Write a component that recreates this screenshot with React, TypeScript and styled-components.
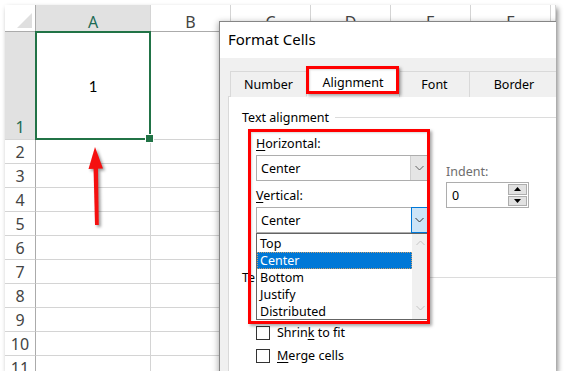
import React from "react"
import styled, { createGlobalStyle } from "styled-components"

const GlobalStyle = createGlobalStyle`
  html, body {
    margin: 0;
    padding: 0;
    background: #fff;
  }
  body {
    font-family: "Noto Sans", "Open Sans", sans-serif;
  }
  * {
    box-sizing: border-box;
  }
`

const UI_FONT = `"Noto Sans", "Open Sans", sans-serif`

const Frame = styled.div`
  position: relative;
  margin: 5px 0 0 5px;
  width: 551px;
  height: 366px;
  overflow: hidden;
  background: #fff;
  box-shadow: 2px 3px 5px rgba(0, 0, 0, 0.45);
`

/* ---------- spreadsheet ---------- */

const Sheet = styled.div`
  display: grid;
  grid-template-columns: 31px 115px repeat(5, 80px) 1fr;
  grid-template-rows: 27px 108px repeat(10, 24px);
`

const Corner = styled.div`
  position: relative;
  border-right: 1px solid #ababab;
  border-bottom: 1px solid #ababab;
  background: #fff;
  &::after {
    content: "";
    position: absolute;
    right: 3px;
    bottom: 3px;
    border-style: solid;
    border-width: 0 0 15px 15px;
    border-color: transparent transparent #dfdfdf transparent;
  }
`

const ColHeader = styled.div<{ $active?: boolean }>`
  display: flex;
  align-items: center;
  justify-content: center;
  border-right: 1px solid #d4d4d4;
  border-bottom: 1px solid ${(p) => (p.$active ? "#217346" : "#ababab")};
  background: ${(p) => (p.$active ? "#e1e1e1" : "#fff")};
  color: ${(p) => (p.$active ? "#1d6b55" : "#444")};
  font-family: ${UI_FONT};
  font-size: 16px;
  padding-top: 7px;
`

const RowHeader = styled.div<{ $active?: boolean }>`
  display: flex;
  align-items: ${(p) => (p.$active ? "flex-end" : "center")};
  justify-content: center;
  padding-bottom: ${(p) => (p.$active ? "2px" : "0")};
  border-right: 1px solid ${(p) => (p.$active ? "#217346" : "#ababab")};
  border-bottom: 1px solid #d4d4d4;
  background: ${(p) => (p.$active ? "#e1e1e1" : "#fff")};
  color: ${(p) => (p.$active ? "#1d6b55" : "#444")};
  font-family: ${UI_FONT};
  font-size: 16px;
  line-height: 20px;
`

const Cell = styled.div<{ $selected?: boolean }>`
  position: relative;
  display: flex;
  align-items: center;
  justify-content: center;
  border-right: 1px solid #d4d4d4;
  border-bottom: 1px solid #d4d4d4;
  font-family: Lato, "Liberation Sans", sans-serif;
  font-size: 15px;
  color: #000;
  ${(p) =>
    p.$selected &&
    `
    &::after {
      content: "";
      position: absolute;
      inset: -1px;
      border: 2px solid #217346;
    }
    &::before {
      content: "";
      position: absolute;
      right: -4px;
      bottom: -4px;
      width: 7px;
      height: 7px;
      background: #217346;
      border: 1px solid #fff;
      z-index: 1;
    }
  `}
`

/* ---------- dialog ---------- */

const Dialog = styled.div`
  position: absolute;
  left: 214px;
  top: 16px;
  width: 360px;
  height: 380px;
  display: flex;
  flex-direction: column;
  background: #f0f0f0;
  border: 1px solid #858585;
  box-shadow: -1px 1px 6px rgba(0, 0, 0, 0.3);
  font-family: ${UI_FONT};
  font-size: 12.5px;
  color: #000;
`

const TitleBar = styled.div`
  height: 36px;
  flex: none;
  display: flex;
  align-items: center;
  padding: 0 0 2px 8px;
  background: #fff;
  font-size: 15px;
`

const Body = styled.div`
  flex: 1;
  padding: 10px 0 0 8px;
  display: flex;
  flex-direction: column;
`

const TabStrip = styled.div`
  display: flex;
  align-items: flex-end;
  height: 29px;
  padding-left: 2px;
  position: relative;
  z-index: 1;
`

const Tab = styled.div<{ $active?: boolean; $w: number }>`
  width: ${(p) => p.$w}px;
  height: ${(p) => (p.$active ? 29 : 26)}px;
  display: flex;
  align-items: center;
  justify-content: center;
  padding-bottom: 1px;
  background: ${(p) => (p.$active ? "#fff" : "#f0f0f0")};
  border: 1px solid #d9d9d9;
  border-bottom: ${(p) => (p.$active ? "1px solid #fff" : "none")};
  margin-right: -1px;
`

const Panel = styled.div`
  flex: 1;
  margin-top: -1px;
  background: #fff;
  border: 1px solid #d9d9d9;
  padding: 12px 0 0 13px;
`

const GroupHead = styled.div`
  display: flex;
  align-items: center;
  gap: 6px;
  height: 16px;
  &::after {
    content: "";
    flex: 1;
    height: 1px;
    background: #dcdcdc;
  }
`

const GroupBody = styled.div`
  display: flex;
  padding-left: 14px;
`

const LeftCol = styled.div`
  width: 172px;
  display: flex;
  flex-direction: column;
  padding-top: 11px;
`

const RightCol = styled.div`
  display: flex;
  flex-direction: column;
  margin-left: 18px;
  padding-top: 39px;
`

const Label = styled.div<{ $muted?: boolean }>`
  height: 16px;
  line-height: 16px;
  color: ${(p) => (p.$muted ? "#6d6d6d" : "#000")};
  u {
    text-decoration: underline;
    text-underline-offset: 2px;
  }
`

const ComboWrap = styled.div`
  position: relative;
  margin-top: 3px;
  margin-bottom: 7px;
`

const Combo = styled.div`
  display: flex;
  height: 26px;
  border: 1px solid #adadad;
  background: #fff;
`

const ComboText = styled.div`
  flex: 1;
  display: flex;
  align-items: center;
  padding-left: 4px;
`

const ComboButton = styled.div<{ $open?: boolean }>`
  width: 17px;
  display: flex;
  align-items: center;
  justify-content: center;
  background: ${(p) => (p.$open ? "#cce4f7" : "#e5e5e5")};
  border: ${(p) => (p.$open ? "1px solid #0078d7" : "none")};
  border-left: 1px solid ${(p) => (p.$open ? "#0078d7" : "#cfcfcf")};
  margin: ${(p) => (p.$open ? "-1px -1px -1px 0" : "0")};
`

const List = styled.div`
  position: absolute;
  top: 26px;
  left: 0;
  right: -2px;
  height: 87px;
  display: flex;
  background: #fff;
  border: 1px solid #646464;
  z-index: 2;
`

const ListItems = styled.div`
  flex: 1;
  padding-top: 1px;
`

const ListItem = styled.div<{ $active?: boolean }>`
  height: 17px;
  line-height: 17px;
  padding-left: 3px;
  background: ${(p) => (p.$active ? "#0078d7" : "transparent")};
  color: ${(p) => (p.$active ? "#fff" : "#000")};
  outline: ${(p) => (p.$active ? "1px dotted #c8a070" : "none")};
  outline-offset: -1px;
`

const ScrollBar = styled.div`
  width: 17px;
  display: flex;
  flex-direction: column;
  justify-content: space-between;
  align-items: center;
  padding: 6px 0 8px;
  background: #f0f0f0;
`

const SpinBox = styled.div`
  margin-top: 2px;
  width: 83px;
  height: 26px;
  display: flex;
  border: 1px solid #adadad;
  background: #fff;
`

const SpinText = styled.div`
  flex: 1;
  display: flex;
  align-items: center;
  padding-left: 5px;
`

const SpinButtons = styled.div`
  width: 19px;
  margin: 1px 1px 1px 0;
  display: flex;
  flex-direction: column;
  gap: 1px;
`

const SpinButton = styled.div`
  flex: 1;
  display: flex;
  align-items: center;
  justify-content: center;
  background: #e1e1e1;
  border: 1px solid #adadad;
`

const ControlGroup = styled.div`
  margin-top: 29px;
`

const CheckList = styled.div`
  display: flex;
  flex-direction: column;
  padding: 13px 0 0 14px;
`

const CheckRow = styled.div`
  height: 23px;
  display: flex;
  align-items: center;
  gap: 7px;
  u {
    text-decoration: underline;
    text-underline-offset: 2px;
  }
`

const Box = styled.span`
  width: 14px;
  height: 14px;
  border: 1px solid #333;
  background: #fff;
`

/* ---------- annotations ---------- */

const RedBox = styled.div<{ $x: number; $y: number; $w: number; $h: number }>`
  position: absolute;
  left: ${(p) => p.$x}px;
  top: ${(p) => p.$y}px;
  width: ${(p) => p.$w}px;
  height: ${(p) => p.$h}px;
  border: 3px solid #ff0000;
  box-shadow: 2px 2px 3px rgba(0, 0, 0, 0.35), inset 1px 1px 2px rgba(0, 0, 0, 0.15);
  z-index: 5;
  pointer-events: none;
`

const Arrow = styled.svg`
  position: absolute;
  left: 80px;
  top: 138px;
  overflow: visible;
  filter: drop-shadow(2px 2px 1.5px rgba(0, 0, 0, 0.4));
  z-index: 4;
`

const Chevron = ({ up, color = "#606060" }: { up?: boolean; color?: string }) => (
  <svg width="9" height="6" viewBox="0 0 9 6">
    <polyline
      points={up ? "0.5,5 4.5,1 8.5,5" : "0.5,1 4.5,5 8.5,1"}
      fill="none"
      stroke={color}
      strokeWidth="1"
    />
  </svg>
)

const Triangle = ({ up }: { up?: boolean }) => (
  <svg width="7" height="4" viewBox="0 0 7 4">
    <polygon points={up ? "0,4 3.5,0 7,4" : "0,0 3.5,4 7,0"} fill="#000" />
  </svg>
)

const columns = ["A", "B", "C", "D", "E", "F", ""]
const rows = [2, 3, 4, 5, 6, 7, 8, 9, 10, 11]
const verticalOptions = ["Top", "Center", "Bottom", "Justify", "Distributed"]

export default function App() {
  return (
    <>
      <GlobalStyle />
      <Frame>
        <Sheet>
          <Corner />
          {columns.map((c, i) => (
            <ColHeader key={i} $active={c === "A"}>
              {c}
            </ColHeader>
          ))}
          <RowHeader $active>1</RowHeader>
          <Cell $selected>1</Cell>
          {columns.slice(1).map((c, i) => (
            <Cell key={i} />
          ))}
          {rows.map((r) => (
            <React.Fragment key={r}>
              <RowHeader>{r}</RowHeader>
              {columns.map((c, i) => (
                <Cell key={i} />
              ))}
            </React.Fragment>
          ))}
        </Sheet>

        <Arrow width="25" height="90" viewBox="0 0 25 90">
          <polygon points="10,4 3.5,26 18,25.5" fill="#f51010" />
          <polygon points="8.5,24 13,24 13.8,82 10,82" fill="#f51010" />
        </Arrow>

        <Dialog>
          <TitleBar>Format Cells</TitleBar>
          <Body>
            <TabStrip>
              <Tab $w={77}>Number</Tab>
              <Tab $w={94} $active>
                Alignment
              </Tab>
              <Tab $w={71}>Font</Tab>
              <Tab $w={90}>Border</Tab>
            </TabStrip>
            <Panel>
              <GroupHead>Text alignment</GroupHead>
              <GroupBody>
                <LeftCol>
                  <Label>
                    <u>H</u>orizontal:
                  </Label>
                  <ComboWrap>
                    <Combo>
                      <ComboText>Center</ComboText>
                      <ComboButton>
                        <Chevron />
                      </ComboButton>
                    </Combo>
                  </ComboWrap>
                  <Label>
                    <u>V</u>ertical:
                  </Label>
                  <ComboWrap>
                    <Combo>
                      <ComboText>Center</ComboText>
                      <ComboButton $open>
                        <Chevron color="#333" />
                      </ComboButton>
                    </Combo>
                    <List>
                      <ListItems>
                        {verticalOptions.map((o) => (
                          <ListItem key={o} $active={o === "Center"}>
                            {o}
                          </ListItem>
                        ))}
                      </ListItems>
                      <ScrollBar>
                        <Chevron up color="#c4c4c4" />
                        <Chevron color="#c4c4c4" />
                      </ScrollBar>
                    </List>
                  </ComboWrap>
                </LeftCol>
                <RightCol>
                  <Label $muted>Indent:</Label>
                  <SpinBox>
                    <SpinText>0</SpinText>
                    <SpinButtons>
                      <SpinButton>
                        <Triangle up />
                      </SpinButton>
                      <SpinButton>
                        <Triangle />
                      </SpinButton>
                    </SpinButtons>
                  </SpinBox>
                </RightCol>
              </GroupBody>
              <ControlGroup>
                <GroupHead>Te</GroupHead>
                <CheckList>
                  {/* first row sits under the open dropdown list */}
                  <CheckRow>
                    <Box />
                  </CheckRow>
                  <CheckRow>
                    <Box />
                    <span>
                      Shrin<u>k</u> to fit
                    </span>
                  </CheckRow>
                  <CheckRow>
                    <Box />
                    <span>
                      <u>M</u>erge cells
                    </span>
                  </CheckRow>
                </CheckList>
              </ControlGroup>
            </Panel>
          </Body>
        </Dialog>

        <RedBox $x={301} $y={61} $w={93} $h={28} />
        <RedBox $x={243} $y={124} $w={182} $h={195} />
      </Frame>
    </>
  )
}
